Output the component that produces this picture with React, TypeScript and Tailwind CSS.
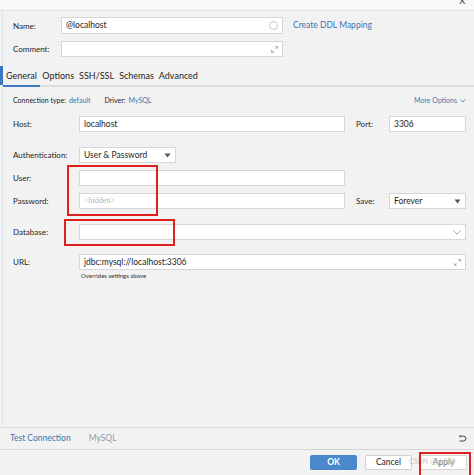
import React from 'react';

const Caret = () => (
  <svg width="7" height="5" viewBox="0 0 7 5" className="shrink-0">
    <path d="M0.5 0.5 L6.5 0.5 L3.5 4.5 Z" fill="#555" />
  </svg>
);

const Chevron = () => (
  <svg width="8" height="5" viewBox="0 0 8 5" className="shrink-0">
    <path d="M0.5 0.5 L4 4 L7.5 0.5" fill="none" stroke="#9a9a9a" strokeWidth="0.9" />
  </svg>
);

const Expand = () => (
  <svg width="7" height="7" viewBox="0 0 7 7" className="shrink-0">
    <path d="M4 0.5 H6.5 V3 M6.5 0.5 L4.3 2.7 M3 6.5 H0.5 V4 M0.5 6.5 L2.7 4.3" fill="none" stroke="#a8a8a8" strokeWidth="0.8" />
  </svg>
);

function Label({ children, w = 'w-[66px]' }: { children: React.ReactNode; w?: string }) {
  return <div className={`${w} shrink-0 text-[8px] text-[#1e1e1e]`}>{children}</div>;
}

function Field({ className = '', children }: { className?: string; children?: React.ReactNode }) {
  return (
    <div className={`h-[16px] bg-white border border-[#d6d6d6] flex items-center px-[4px] text-[8.5px] text-[#1e1e1e] ${className}`}>
      {children}
    </div>
  );
}

export default function App() {
  const tabs = ['General', 'Options', 'SSH/SSL', 'Schemas', 'Advanced'];

  return (
    <div
      className="w-[474px] h-[475px] bg-[#f2f2f2] relative overflow-hidden leading-none"
      style={{ fontFamily: 'Lato, "Noto Sans", Arial, sans-serif' }}
    >
      {/* top strip */}
      <div className="h-[11px] bg-[#f8f8f8] border-b border-[#e2e2e2] flex justify-end pr-[9px]">
        <span className="text-[9px] text-[#333] -mt-[4px]">X</span>
      </div>

      <div className="ml-[2px] border-l border-[#dfe4ea] h-[416px] flex flex-col">
        {/* name */}
        <div className="mt-[6px] flex items-center pl-[10px]">
          <Label w="w-[48px]">Name:</Label>
          <Field className="w-[222px] h-[17px] justify-between">
            <span>@localhost</span>
            <span className="w-[9px] h-[9px] rounded-full border border-[#c4c4c4]" />
          </Field>
          <span className="ml-[10px] text-[8.5px] text-[#3f72b0]">Create DDL Mapping</span>
        </div>

        {/* comment */}
        <div className="mt-[7px] flex items-center pl-[10px]">
          <Label w="w-[48px]">Comment:</Label>
          <Field className="w-[222px] justify-end">
            <Expand />
          </Field>
        </div>

        {/* tabs */}
        <div className="mt-[9px] h-[21px] border-b-2 border-[#dcdcdc] flex items-end relative">
          <div className="absolute -left-[3px] top-0 w-[3px] h-[19px] bg-[#3d78c4]" />
          {tabs.map((t, i) => (
            <div
              key={t}
              className={`flex items-center text-[9px] text-[#1e1e1e] ${
                i === 0 ? 'pl-[3px] pr-[3px] border-b-2 border-[#3d78c4] -mb-[2px] h-[21px]' : 'h-[19px] px-[2.5px]'
              }`}
            >
              {t}
            </div>
          ))}
        </div>

        {/* connection type */}
        <div className="mt-[10px] flex items-center pl-[10px] pr-[8px] text-[7px]">
          <span className="text-[#222]">Connection type:</span>
          <span className="ml-[3px] text-[#3f72b0]">default</span>
          <span className="ml-[14px] text-[#222]">Driver:</span>
          <span className="ml-[3px] text-[#3f72b0]">MySQL</span>
          <span className="ml-auto text-[#3f72b0] flex items-center gap-[3px]">
            More Options
            <svg width="6" height="4" viewBox="0 0 6 4">
              <path d="M0.5 0.5 L3 3 L5.5 0.5" fill="none" stroke="#3f72b0" strokeWidth="0.8" />
            </svg>
          </span>
        </div>

        {/* host */}
        <div className="mt-[12px] flex items-center pl-[10px] pr-[8px]">
          <Label>Host:</Label>
          <Field className="w-[266px]">localhost</Field>
          <Label w="w-[33px] ml-[11px]">Port:</Label>
          <Field className="flex-1">3306</Field>
        </div>

        {/* auth */}
        <div className="mt-[15px] flex items-center pl-[10px] pr-[8px]">
          <Label>Authentication:</Label>
          <Field className="w-[97px] justify-between">
            <span>User &amp; Password</span>
            <Caret />
          </Field>
        </div>

        {/* user */}
        <div className="mt-[7px] flex items-center pl-[10px] pr-[8px]">
          <Label>User:</Label>
          <Field className="w-[266px]" />
        </div>

        {/* password */}
        <div className="mt-[7px] flex items-center pl-[10px] pr-[8px]">
          <Label>Password:</Label>
          <Field className="w-[266px]">
            <span className="text-[8px] text-[#b4b4b4]" style={{ fontFamily: '"Liberation Serif", serif' }}>
              &lt;hidden&gt;
            </span>
          </Field>
          <Label w="w-[33px] ml-[11px]">Save:</Label>
          <Field className="flex-1 justify-between">
            <span>Forever</span>
            <Caret />
          </Field>
        </div>

        {/* database */}
        <div className="mt-[15px] flex items-center pl-[10px] pr-[8px]">
          <Label>Database:</Label>
          <Field className="flex-1 justify-end">
            <Chevron />
          </Field>
        </div>

        {/* url */}
        <div className="mt-[14px] flex items-center pl-[10px] pr-[8px]">
          <Label>URL:</Label>
          <Field className="flex-1 justify-between">
            <span>jdbc:mysql://localhost:3306</span>
            <Expand />
          </Field>
        </div>
        <div className="mt-[3px] pl-[78px] text-[6px] text-[#333]">Overrides settings above</div>
      </div>

      {/* footer */}
      <div className="border-t border-[#dcdcdc] h-[22px] flex items-center pl-[10px] pr-[7px] text-[8.5px]">
        <span className="text-[#3f72b0]">Test Connection</span>
        <span className="ml-[18px] text-[#9a9a9a]">MySQL</span>
        <svg className="ml-auto" width="9" height="8" viewBox="0 0 9 8">
          <path d="M2.5 1.2 H5.5 A2.4 2.4 0 0 1 5.5 6 H1.5 M2.8 0 L1.3 1.2 L2.8 2.4" fill="none" stroke="#333" strokeWidth="0.9" />
        </svg>
      </div>
      <div className="border-t border-[#d6d6d6] h-[26px] flex items-center justify-end pr-[7px] gap-[8px]">
        <div className="w-[47px] h-[15px] bg-[#4a87cc] rounded-[2px] text-white text-[8.5px] font-bold flex items-center justify-center">
          OK
        </div>
        <div className="w-[47px] h-[15px] bg-white border border-[#d0d0d0] rounded-[2px] text-[#222] text-[8.5px] flex items-center justify-center">
          Cancel
        </div>
        <div className="w-[47px] h-[15px] bg-white border border-[#d6d6d6] rounded-[2px] text-[#777] text-[8.5px] flex items-center justify-center">
          Apply
        </div>
      </div>

      {/* watermark */}
      <div className="absolute left-[409px] top-[458px] text-[7px] text-[#c8c8c8] opacity-90">CSDN @ok080</div>

      {/* annotation boxes */}
      <div className="absolute left-[67px] top-[165px] w-[91px] h-[51px] border-2 border-[#e02020]" />
      <div className="absolute left-[64px] top-[219px] w-[111px] h-[27px] border-2 border-[#e02020]" />
      <div className="absolute left-[419px] top-[452px] w-[52px] h-[26px] border-2 border-[#e02020]" />
    </div>
  );
}
